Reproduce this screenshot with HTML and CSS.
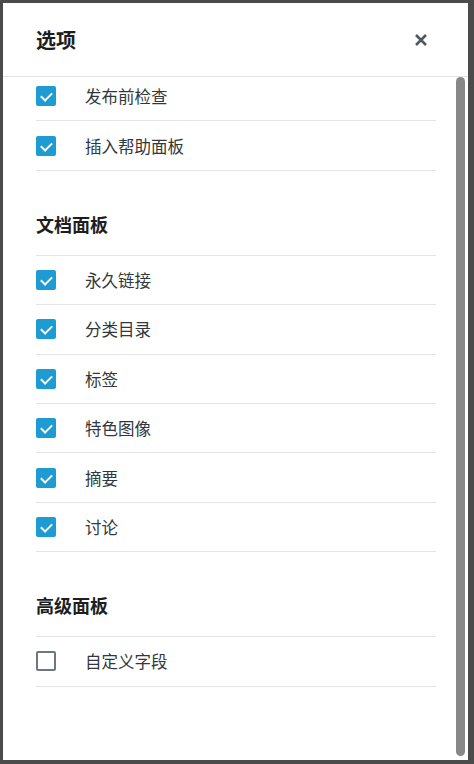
FILE: index.html
```html
<!DOCTYPE html>
<html lang="zh-CN">
<head>
    <meta charset="UTF-8">
    <meta name="viewport" content="width=device-width, initial-scale=1.0">
    <title>选项</title>
    <link rel="stylesheet" href="styles.css">
</head>
<body>
    <div class="modal">
        <div class="modal-header">
            <h1 class="modal-title">选项</h1>
            <button class="close-button" aria-label="关闭">
                <svg width="14" height="14" viewBox="0 0 14 14">
                    <path d="M2 2 L12 12 M12 2 L2 12" stroke="#50575e" stroke-width="2.6" stroke-linecap="butt"/>
                </svg>
            </button>
        </div>

        <div class="modal-content">
            <div class="section first">
                <label class="option">
                    <span class="checkbox checked"></span>
                    <span class="option-label">发布前检查</span>
                </label>
                <label class="option">
                    <span class="checkbox checked"></span>
                    <span class="option-label">插入帮助面板</span>
                </label>
            </div>

            <div class="section">
                <h2 class="section-title">文档面板</h2>
                <label class="option">
                    <span class="checkbox checked"></span>
                    <span class="option-label">永久链接</span>
                </label>
                <label class="option">
                    <span class="checkbox checked"></span>
                    <span class="option-label">分类目录</span>
                </label>
                <label class="option">
                    <span class="checkbox checked"></span>
                    <span class="option-label">标签</span>
                </label>
                <label class="option">
                    <span class="checkbox checked"></span>
                    <span class="option-label">特色图像</span>
                </label>
                <label class="option">
                    <span class="checkbox checked"></span>
                    <span class="option-label">摘要</span>
                </label>
                <label class="option">
                    <span class="checkbox checked"></span>
                    <span class="option-label">讨论</span>
                </label>
            </div>

            <div class="section">
                <h2 class="section-title">高级面板</h2>
                <label class="option">
                    <span class="checkbox"></span>
                    <span class="option-label">自定义字段</span>
                </label>
            </div>
        </div>

        <div class="scrollbar"></div>
    </div>
</body>
</html>
```

FILE: styles.css
```css
body {
    margin: 0;
    background-color: #4b4b4b;
    font-family: "Noto Sans CJK SC", "Noto Sans", sans-serif;
}

.modal {
    position: relative;
    height: 757px;
    margin: 3px 6px 0 3px;
    background: #fff;
    display: flex;
    flex-direction: column;
    overflow: hidden;
}

.modal-header {
    height: 73px;
    flex-shrink: 0;
    display: flex;
    align-items: center;
    justify-content: space-between;
    padding: 0 40px 0 33px;
    border-bottom: 1px solid #e2e4e7;
}

.modal-title {
    margin: 0;
    font-size: 20px;
    font-weight: 700;
    color: #1e1e1e;
    line-height: 28px;
}

.close-button {
    border: 0;
    background: none;
    padding: 0;
    width: 14px;
    height: 14px;
    display: flex;
}

.modal-content {
    flex: 1;
    overflow: hidden;
    padding: 0 32px 0 33px;
}

.section.first {
    margin-top: -5px;
}

.section-title {
    margin: 0;
    padding: 41px 0 19px;
    font-size: 18px;
    font-weight: 700;
    line-height: 24px;
    color: #1e1e1e;
    border-bottom: 1px solid #e2e4e7;
}

.option {
    height: 48.4px;
    display: flex;
    align-items: center;
    border-bottom: 1px solid #e2e4e7;
}

.checkbox {
    width: 20px;
    height: 20px;
    box-sizing: border-box;
    border: 2px solid #6c7781;
    border-radius: 2px;
    margin-right: 29px;
    position: relative;
}

.checkbox.checked {
    background-color: #1e9bd2;
    border-color: #1e9bd2;
}

.checkbox.checked::after {
    content: "";
    position: absolute;
    left: 4px;
    top: 1px;
    width: 9px;
    height: 5px;
    border-left: 2px solid #fff;
    border-bottom: 2px solid #fff;
    transform: translate(-1px, 3px) rotate(-45deg);
}

.option-label {
    font-size: 16.5px;
    color: #32373c;
    line-height: 24px;
}

.scrollbar {
    position: absolute;
    top: 74px;
    right: 3px;
    width: 9px;
    bottom: 4px;
    border-radius: 5px;
    background-color: #888;
}
```
